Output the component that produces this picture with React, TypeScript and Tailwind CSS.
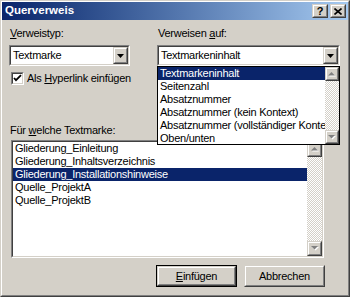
import React from "react";

type BoxProps = { className?: string; children?: React.ReactNode };

// classic 3d borders
const Sunken = ({ className = "", children }: BoxProps) => (
  <div className={`border border-t-[#808080] border-l-[#808080] border-r-white border-b-white ${className}`}>
    <div className="h-full w-full border border-t-[#404040] border-l-[#404040] border-r-[#d4d0c8] border-b-[#d4d0c8] bg-white flex">
      {children}
    </div>
  </div>
);

const Raised = ({ className = "", children }: BoxProps) => (
  <div className={`border border-t-[#d4d0c8] border-l-[#d4d0c8] border-r-[#404040] border-b-[#404040] bg-[#d4d0c8] ${className}`}>
    <div className="h-full w-full border border-t-white border-l-white border-r-[#808080] border-b-[#808080] flex items-center justify-center">
      {children}
    </div>
  </div>
);

const ArrowDown = ({ disabled = false }: { disabled?: boolean }) =>
  disabled ? (
    <svg width="8" height="5" viewBox="0 0 8 5">
      <path d="M1 1h7L4.5 4.5z" fill="#ffffff" />
      <path d="M0 0h7L3.5 3.5z" fill="#808080" />
    </svg>
  ) : (
    <svg width="7" height="4" viewBox="0 0 7 4">
      <path d="M0 0h7L3.5 4z" fill="#000" />
    </svg>
  );

const ArrowUp = () => (
  <svg width="8" height="5" viewBox="0 0 8 5">
    <path d="M1 4.5h7L4.5 1z" fill="#ffffff" />
    <path d="M0 3.5h7L3.5 0z" fill="#808080" />
  </svg>
);

const Track = ({ className = "" }: { className?: string }) => (
  <div className={`bg-[repeating-conic-gradient(#d4d0c8_0_25%,#ffffff_0_50%)] bg-[length:2px_2px] ${className}`} />
);

const Combo = ({ value, className = "" }: { value: string; className?: string }) => (
  <Sunken className={`h-[21px] ${className}`}>
    <div className="flex-1 pl-[2px] leading-[17px] whitespace-nowrap overflow-hidden">{value}</div>
    <Raised className="w-[15px] h-[17px]">
      <ArrowDown />
    </Raised>
  </Sunken>
);

const popupItems = [
  "Textmarkeninhalt",
  "Seitenzahl",
  "Absatznummer",
  "Absatznummer (kein Kontext)",
  "Absatznummer (vollständiger Kontext)",
  "Oben/unten",
];

const marks = [
  "Gliederung_Einleitung",
  "Gliederung_Inhaltsverzeichnis",
  "Gliederung_Installationshinweise",
  "Quelle_ProjektA",
  "Quelle_ProjektB",
];

export default function App() {
  return (
    <div className="relative w-[350px] h-[297px] bg-[#d4d0c8] font-['Liberation_Sans',Arial,sans-serif] text-[11px] tracking-[-0.25px] text-black border border-t-[#d4d0c8] border-l-[#d4d0c8] border-r-[#404040] border-b-[#404040]">
      <div className="h-full w-full border border-t-white border-l-white border-r-[#808080] border-b-[#808080] flex flex-col">
        {/* title bar */}
        <div className="h-[18px] flex items-center pl-[3px] pr-[2px] bg-gradient-to-r from-[#0a246a] to-[#a6caf0]">
          <span className="flex-1 text-white font-bold text-[11.5px] tracking-normal">Querverweis</span>
          <div className="flex gap-[2px]">
            <Raised className="w-[16px] h-[14px]">
              <span className="font-bold text-[11px] leading-none mt-[1px]">?</span>
            </Raised>
            <Raised className="w-[16px] h-[14px]">
              <svg width="8" height="7" viewBox="0 0 8 7">
                <path d="M0.5 0.5l7 6M7.5 0.5l-7 6" stroke="#000" strokeWidth="1.6" />
              </svg>
            </Raised>
          </div>
        </div>

        {/* body */}
        <div className="pl-[7px] pt-[7px]">
          <div className="flex">
            <div className="w-[121px]">
              <div className="h-[13px] leading-[13px] pl-[1px]">
                <u className="underline-offset-1">V</u>erweistyp:
              </div>
              <Combo value="Textmarke" className="mt-[5px]" />
              <div className="mt-[6px] ml-[2px] flex items-center gap-[3px] h-[13px]">
                <Sunken className="w-[13px] h-[13px]">
                  <svg width="9" height="9" viewBox="0 0 9 9" className="m-auto">
                    <path d="M1 4l2 2.2L8 1.2" stroke="#000" strokeWidth="1.8" fill="none" />
                  </svg>
                </Sunken>
                <span className="whitespace-nowrap">
                  Als <u className="underline-offset-1">H</u>yperlink einfügen
                </span>
              </div>
            </div>
            <div className="ml-[27px] w-[183px]">
              <div className="h-[13px] leading-[13px] pl-[1px]">
                Verweisen <u className="underline-offset-1">a</u>uf:
              </div>
              <Combo value="Textmarkeninhalt" className="mt-[5px]" />
            </div>
          </div>

          <div className="mt-[39px] h-[13px] leading-[13px] pl-[1px]">
            Für <u className="underline-offset-1">w</u>elche Textmarke:
          </div>
          <Sunken className="mt-[3px] ml-[2px] w-[313px] h-[118px]">
            <div className="flex-1 flex flex-col">
              {marks.map((m, i) => (
                <div
                  key={m}
                  className={`h-[13px] leading-[13px] pl-[2px] whitespace-nowrap ${i === 2 ? "bg-[#0a246a] text-white" : ""}`}
                >
                  {m}
                </div>
              ))}
            </div>
            <div className="w-[15px] flex flex-col">
              <Raised className="w-[15px] h-[15px]">
                <ArrowUp />
              </Raised>
              <Track className="flex-1" />
              <Raised className="w-[15px] h-[15px]">
                <ArrowDown disabled />
              </Raised>
            </div>
          </Sunken>

          <div className="mt-[7px] w-[316px] flex justify-end gap-[7px]">
            <div className="border border-black">
              <Raised className="w-[79px] h-[20px]">
                <span>
                  <u className="underline-offset-1">E</u>infügen
                </span>
              </Raised>
            </div>
            <Raised className="w-[81px] h-[22px]">
              <span>Abbrechen</span>
            </Raised>
          </div>
        </div>
      </div>

      {/* open dropdown list */}
      <div className="absolute left-[156px] top-[65px] w-[183px] h-[79px] border border-black bg-white flex">
        <div className="flex-1 overflow-hidden">
          {popupItems.map((p, i) => (
            <div
              key={p}
              className={`h-[13px] leading-[13px] pl-[2px] whitespace-nowrap ${i === 0 ? "bg-[#0a246a] text-white" : ""}`}
            >
              {p}
            </div>
          ))}
        </div>
        <div className="w-[14px] flex flex-col">
          <Raised className="w-[14px] h-[14px]">
            <ArrowUp />
          </Raised>
          <Track className="flex-1" />
          <Raised className="w-[14px] h-[14px]">
            <ArrowDown disabled />
          </Raised>
        </div>
      </div>
    </div>
  );
}
